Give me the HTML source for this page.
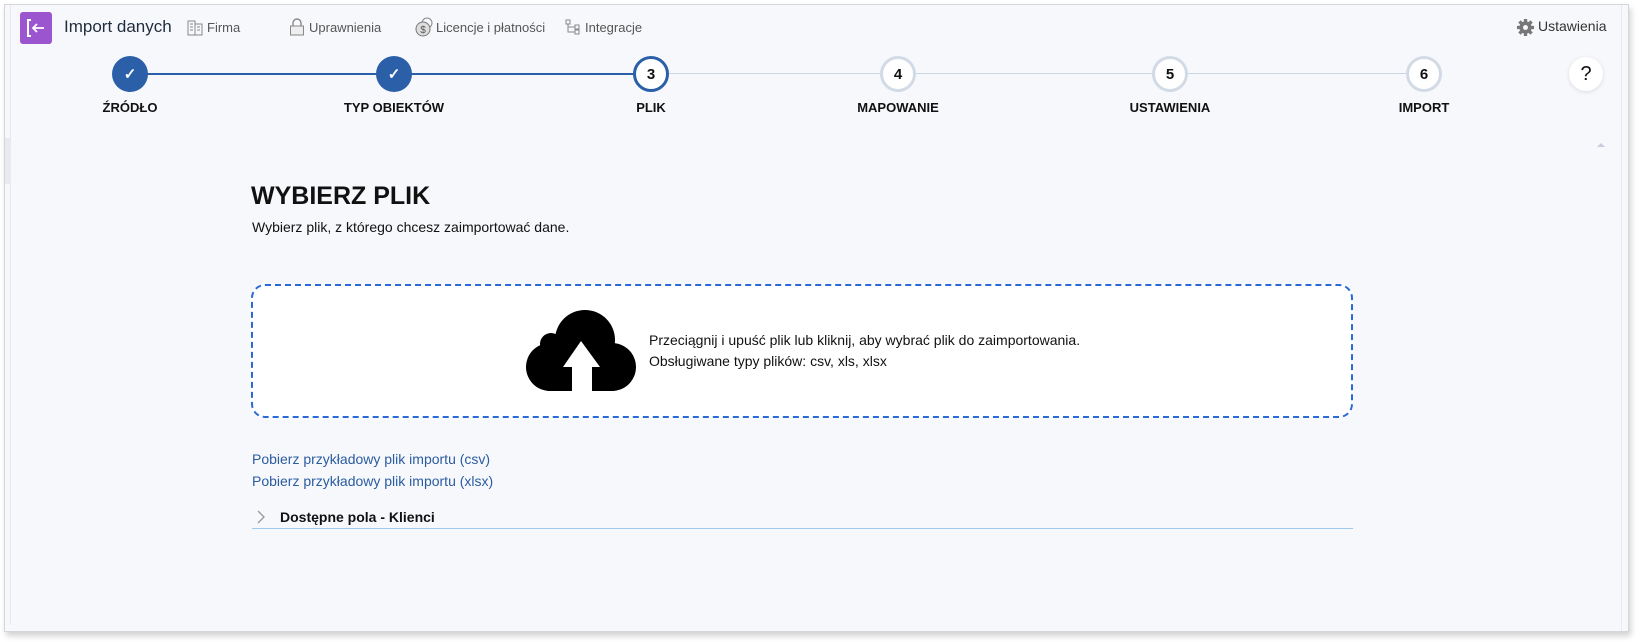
<!DOCTYPE html>
<html><head><meta charset="utf-8"><style>
*{box-sizing:border-box;margin:0;padding:0}
body{width:1640px;height:642px;background:#fff;font-family:"Liberation Sans",sans-serif;position:relative;overflow:hidden;color:#111}
.frame{position:absolute;left:4px;top:4px;width:1625px;height:628px;background:#f7f8fc;border:1px solid #d4d6dc;box-shadow:2px 4px 6px rgba(0,0,0,.18)}
.abs{position:absolute}
.nav{font-size:13px;color:#555;top:20px}
.circle{position:absolute;width:36px;height:36px;border-radius:50%;top:56px;display:flex;align-items:center;justify-content:center;font-weight:bold;font-size:15px;color:#111}
.done{background:#2b5fa8;color:#fff}
.cur{background:#fff;border:3px solid #2b5fa8}
.todo{background:#fff;border:3px solid #d2dbe5}
.lbl{position:absolute;top:100px;font-weight:bold;font-size:13px;transform:translateX(-50%);white-space:nowrap;color:#111}
a{color:#2a5ca0;text-decoration:none}
</style></head><body>
<div class="frame"></div>
<div class="abs" style="left:5px;top:5px;width:6px;height:620px;border-right:1px solid #e6e8ee"></div>
<div class="abs" style="left:5px;top:138px;width:6px;height:46px;background:#e8eaf0"></div>
<div class="abs" style="left:1621px;top:5px;width:1px;height:626px;background:#e8eaef"></div>

<div class="abs" style="left:20px;top:12px;width:32px;height:32px;background:#9b55cf;border-radius:3px">
<svg width="32" height="32" viewBox="0 0 32 32"><path d="M11 8H8v16h3" stroke="#fff" stroke-width="2" fill="none"/><path d="M24 16H13M17 12l-4 4 4 4" stroke="#fff" stroke-width="1.8" fill="none"/></svg></div>
<div class="abs" style="left:64px;top:17px;font-size:17px;color:#1f2d3d">Import danych</div>

<svg class="abs" style="left:187px;top:20px" width="16" height="16" viewBox="0 0 16 16"><rect x="1" y="1" width="7" height="14" fill="none" stroke="#888"/><rect x="8" y="4" width="7" height="11" fill="none" stroke="#888"/><path d="M3 4h3M3 7h3M3 10h3M10 7h3M10 10h3" stroke="#888"/></svg>
<div class="abs nav" style="left:207px">Firma</div>
<svg class="abs" style="left:289px;top:18px" width="16" height="18" viewBox="0 0 16 18"><path d="M4 8V5a4 4 0 0 1 8 0v3" fill="none" stroke="#888" stroke-width="1.4"/><rect x="1.5" y="8" width="13" height="9" fill="#eee" stroke="#888"/></svg>
<div class="abs nav" style="left:309px">Uprawnienia</div>
<svg class="abs" style="left:415px;top:17px" width="18" height="20" viewBox="0 0 18 20"><circle cx="12" cy="6" r="5" fill="none" stroke="#888"/><circle cx="8" cy="12" r="7" fill="#ddd" stroke="#777"/><text x="8" y="16" font-size="10" text-anchor="middle" fill="#555" font-family="Liberation Sans">$</text></svg>
<div class="abs nav" style="left:436px">Licencje i płatności</div>
<svg class="abs" style="left:565px;top:19px" width="16" height="16" viewBox="0 0 16 16"><rect x="1" y="1" width="4" height="4" fill="none" stroke="#888"/><rect x="10" y="6" width="4" height="4" fill="none" stroke="#888"/><rect x="10" y="11" width="4" height="4" fill="none" stroke="#888"/><path d="M3 5v8h7M3 8h7" stroke="#888" fill="none"/></svg>
<div class="abs nav" style="left:585px">Integracje</div>

<svg class="abs" style="left:1516px;top:18px" width="19" height="19" viewBox="0 0 20 20"><g fill="#777"><circle cx="10" cy="10" r="6.5"/><g stroke="#777" stroke-width="3.5"><path d="M10 1v18M1 10h18M3.6 3.6l12.8 12.8M16.4 3.6L3.6 16.4"/></g></g><circle cx="10" cy="10" r="2.6" fill="#f7f8fc"/></svg>
<div class="abs" style="left:1538px;top:18px;font-size:14px;color:#333">Ustawienia</div>

<div class="abs" style="left:130px;top:73px;width:521px;height:1.5px;background:#2b5fa8"></div>
<div class="abs" style="left:651px;top:73px;width:773px;height:1px;background:#cbd6e3"></div>
<div class="circle done" style="left:112px">✓</div>
<div class="circle done" style="left:376px">✓</div>
<div class="circle cur" style="left:633px">3</div>
<div class="circle todo" style="left:880px">4</div>
<div class="circle todo" style="left:1152px">5</div>
<div class="circle todo" style="left:1406px">6</div>
<div class="lbl" style="left:130px">ŹRÓDŁO</div>
<div class="lbl" style="left:394px">TYP OBIEKTÓW</div>
<div class="lbl" style="left:651px">PLIK</div>
<div class="lbl" style="left:898px">MAPOWANIE</div>
<div class="lbl" style="left:1170px">USTAWIENIA</div>
<div class="lbl" style="left:1424px">IMPORT</div>
<div class="abs" style="left:1569px;top:57px;width:34px;height:34px;border-radius:50%;background:#fff;box-shadow:0 1px 4px rgba(0,0,0,.12);font-size:20px;text-align:center;line-height:34px">?</div>
<div class="abs" style="left:1597px;top:143px;width:0;height:0;border-left:4px solid transparent;border-right:4px solid transparent;border-bottom:4px solid #ccd"></div>

<div class="abs" style="left:251px;top:182px;font-size:25px;font-weight:bold;color:#111">WYBIERZ PLIK</div>
<div class="abs" style="left:252px;top:219px;font-size:14px">Wybierz plik, z którego chcesz zaimportować dane.</div>

<div class="abs" style="left:251px;top:284px;width:1102px;height:134px;border:2px dashed #2a6ad6;border-radius:14px;background:#fff"></div>
<svg class="abs" style="left:526px;top:310px" width="110" height="82" viewBox="0 0 110 82"><g fill="#000"><circle cx="59" cy="30" r="30"/><circle cx="24" cy="57" r="24"/><circle cx="25" cy="34" r="11"/><circle cx="86" cy="57" r="24"/><rect x="22" y="45" width="66" height="36"/></g><path d="M55 31L37 57h9v25h20V57h8z" fill="#fff"/></svg>
<div class="abs" style="left:649px;top:330px;font-size:14px;line-height:21px">Przeciągnij i upuść plik lub kliknij, aby wybrać plik do zaimportowania.<br>Obsługiwane typy plików: csv, xls, xlsx</div>

<div class="abs" style="left:252px;top:448px;font-size:14px;line-height:22px"><a>Pobierz przykładowy plik importu (csv)</a><br><a>Pobierz przykładowy plik importu (xlsx)</a></div>
<svg class="abs" style="left:256px;top:510px" width="10" height="14" viewBox="0 0 10 14"><path d="M2 1l6 6-6 6" stroke="#999" stroke-width="1.3" fill="none"/></svg>
<div class="abs" style="left:280px;top:509px;font-size:14px;font-weight:bold">Dostępne pola - Klienci</div>
<div class="abs" style="left:252px;top:528px;width:1101px;height:1px;background:#9ccbee"></div>
</body></html>
